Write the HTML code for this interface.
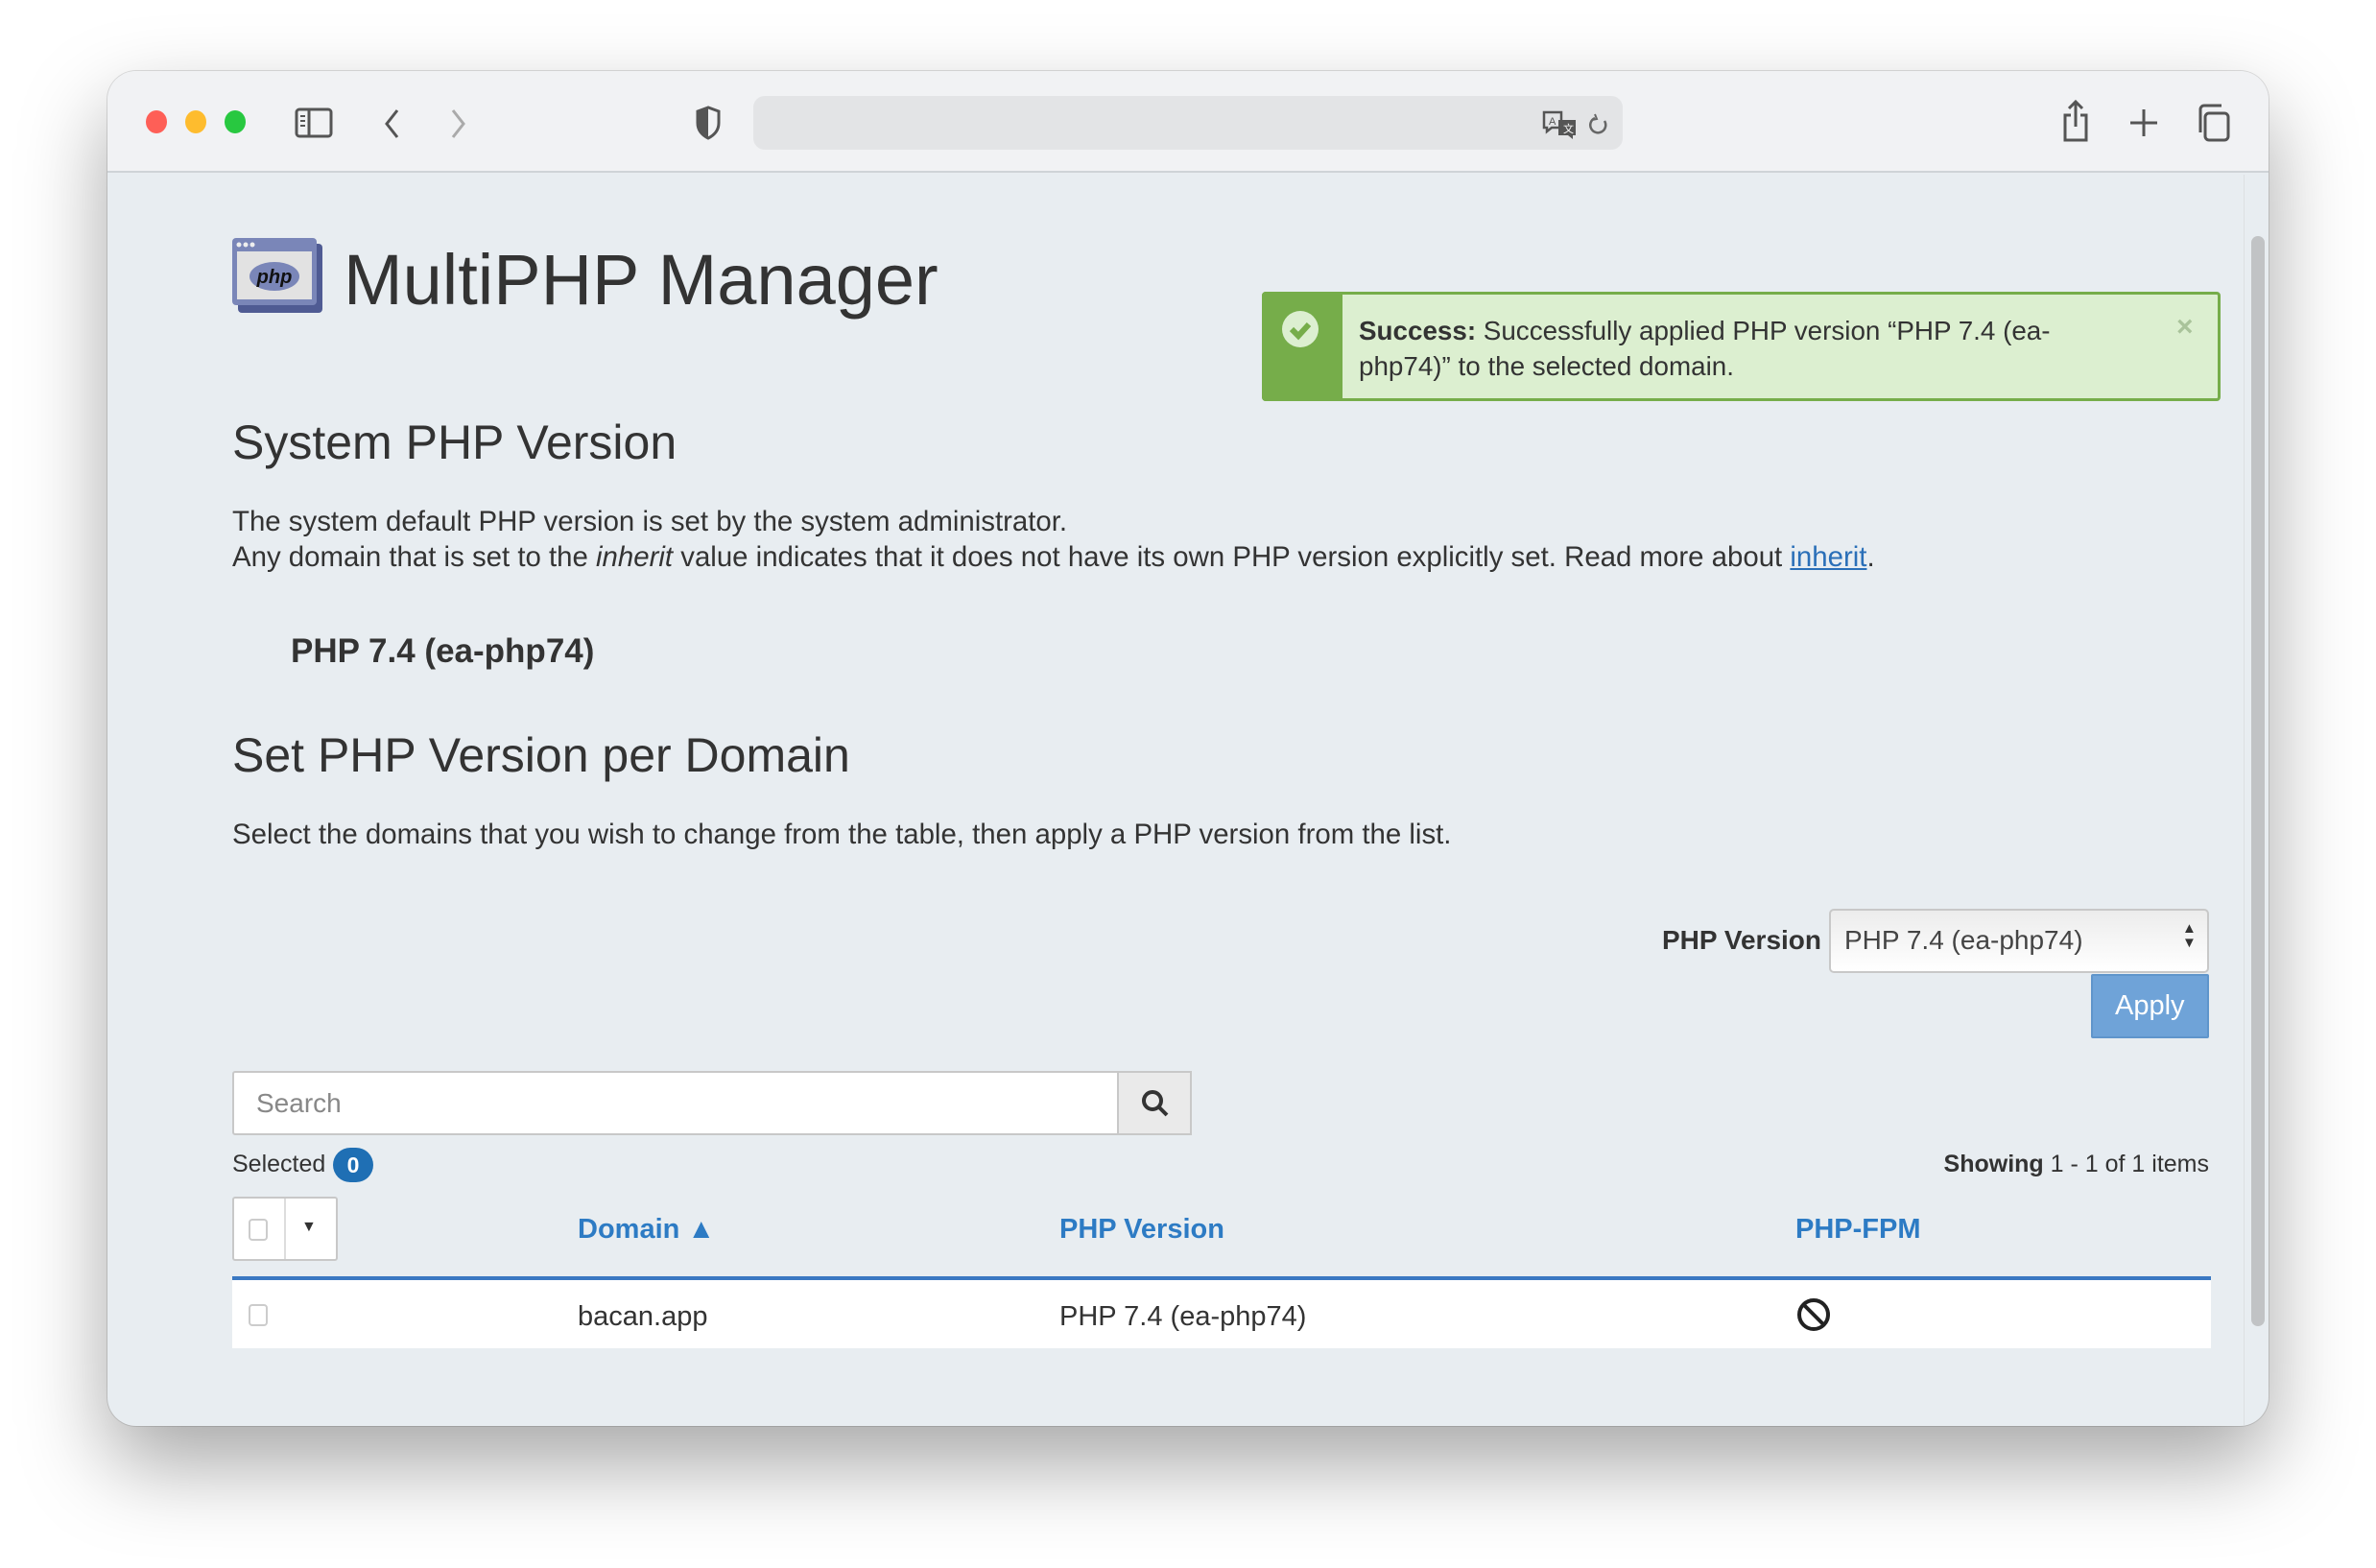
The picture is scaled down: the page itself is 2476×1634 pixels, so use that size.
<!DOCTYPE html>
<html><head><meta charset="utf-8"><style>
*{box-sizing:border-box;margin:0;padding:0}
body{width:2476px;height:1634px;background:#fff;position:relative;overflow:hidden;font-family:"Liberation Sans",sans-serif;color:#333}
.win{position:absolute;left:112px;top:74px;width:2252px;height:1412px;border-radius:30px;background:#e8edf1;box-shadow:0 40px 90px rgba(0,0,0,.35),0 0 0 1px rgba(0,0,0,.12);overflow:hidden}
.tb{position:absolute;left:0;top:0;width:100%;height:106px;background:#f1f2f4;border-bottom:2px solid #cfd3d7}
.a{position:absolute}
.dot{position:absolute;top:41px;width:22px;height:24px;border-radius:50%}
.t{position:absolute;white-space:nowrap}
</style></head><body>
<div class="win">
 <div class="tb">
  <div class="dot" style="left:40px;background:#fe5f57"></div>
  <div class="dot" style="left:81px;background:#febc2e"></div>
  <div class="dot" style="left:122px;background:#28c840"></div>
  <svg class="a" style="left:195px;top:38px" width="40" height="32" viewBox="0 0 40 32"><rect x="2" y="2" width="36" height="28" rx="3" fill="none" stroke="#555" stroke-width="3"/><line x1="15" y1="2" x2="15" y2="30" stroke="#555" stroke-width="3"/><path d="M6 9h5M6 14h5M6 19h5" stroke="#555" stroke-width="2"/></svg>
  <svg class="a" style="left:284px;top:38px" width="24" height="34"><path d="M18 3L7 17l11 14" fill="none" stroke="#555" stroke-width="3"/></svg>
  <svg class="a" style="left:354px;top:38px" width="24" height="34"><path d="M6 3l11 14L6 31" fill="none" stroke="#aaa" stroke-width="3"/></svg>
  <svg class="a" style="left:612px;top:36px" width="28" height="36"><path d="M14 2L3 6v12c0 8 5 13 11 16 6-3 11-8 11-16V6z" fill="none" stroke="#555" stroke-width="3"/><path d="M3 6l11-4v32c-6-3-11-8-11-16z" fill="#555"/></svg>
  <div class="a" style="left:673px;top:26px;width:906px;height:56px;border-radius:12px;background:#e3e4e6"></div>
  <svg class="a" style="left:1494px;top:40px" width="40" height="32" viewBox="0 0 40 32"><path d="M3 3h18v16H11l-5 4v-4H3z" fill="none" stroke="#555" stroke-width="2.5"/><path d="M18 11h18v16h-3v4l-5-4H18z" fill="#555"/><text x="8" y="16" font-size="11" font-family="Liberation Sans" fill="#555">A</text><text x="23" y="24" font-size="11" font-family="Liberation Sans" fill="#fff">文</text></svg>
  <svg class="a" style="left:1542px;top:42px" width="24" height="30"><path d="M18 10a8 8 0 1 1-10-3" fill="none" stroke="#666" stroke-width="2.5"/><path d="M8 3l2 5-5 1" fill="none" stroke="#666" stroke-width="2"/></svg>
  <svg class="a" style="left:2036px;top:28px" width="30" height="48"><path d="M10 18H4v26h22V18h-6M15 30V4M8 11l7-7 7 7" fill="none" stroke="#555" stroke-width="3"/></svg>
  <svg class="a" style="left:2107px;top:38px" width="30" height="32"><path d="M15 2v28M1 16h28" stroke="#555" stroke-width="3"/></svg>
  <svg class="a" style="left:2177px;top:34px" width="36" height="40"><rect x="9" y="10" width="24" height="28" rx="4" fill="none" stroke="#555" stroke-width="3"/><path d="M4 30V6a4 4 0 0 1 4-4h18" fill="none" stroke="#555" stroke-width="3"/></svg>
 </div>
 <div class="a" style="left:2234px;top:172px;width:14px;height:1136px;border-radius:7px;background:#c1c3c5"></div>
 <div class="a" style="left:2226px;top:108px;width:1px;height:1304px;background:#dde0e3"></div>

 <svg class="a" style="left:130px;top:174px" width="96" height="80" viewBox="0 0 96 80"><rect x="6" y="6" width="88" height="72" rx="4" fill="#4f5b93"/><rect x="0" y="0" width="88" height="70" rx="4" fill="#7a86b8"/><rect x="5" y="14" width="78" height="50" fill="#e2e2e2"/><circle cx="7" cy="7" r="2.5" fill="#eee"/><circle cx="14" cy="7" r="2.5" fill="#eee"/><circle cx="21" cy="7" r="2.5" fill="#eee"/><ellipse cx="44" cy="40" rx="26" ry="15" fill="#7a86b8"/><text x="44" y="47" text-anchor="middle" font-family="Liberation Sans" font-style="italic" font-weight="bold" font-size="20" fill="#111">php</text></svg>
 <div class="t" style="left:246px;top:175px;font-size:74px;color:#333">MultiPHP Manager</div>

 <div class="a" style="left:1203px;top:230px;width:999px;height:114px;border:3px solid #76ad4a;border-radius:4px;background:#dcefd0"></div>
 <div class="a" style="left:1203px;top:230px;width:84px;height:114px;background:#76ad4a;border-radius:4px 0 0 4px"></div>
 <svg class="a" style="left:1223px;top:249px" width="40" height="40"><circle cx="20" cy="20" r="19" fill="#dcefd0"/><path d="M11 20l7 7 11-12" fill="none" stroke="#76ad4a" stroke-width="6"/></svg>
 <div class="t" style="left:1304px;top:252px;font-size:27.8px;line-height:37px;color:#333"><b>Success:</b> Successfully applied PHP version “PHP 7.4 (ea-<br>php74)” to the selected domain.</div>
 <div class="t" style="left:2156px;top:250px;font-size:30px;font-weight:bold;color:#a9c39a">×</div>

 <div class="t" style="left:130px;top:358px;font-size:50px;color:#333">System PHP Version</div>
 <div class="t" style="left:130px;top:451px;font-size:29.4px;line-height:37px;color:#333">The system default PHP version is set by the system administrator.<br>Any domain that is set to the <i>inherit</i> value indicates that it does not have its own PHP version explicitly set. Read more about <span style="color:#2a6fb8;text-decoration:underline">inherit</span>.</div>
 <div class="t" style="left:191px;top:585px;font-size:35px;font-weight:bold;color:#333">PHP 7.4 (ea-php74)</div>
 <div class="t" style="left:130px;top:684px;font-size:50px;color:#333">Set PHP Version per Domain</div>
 <div class="t" style="left:130px;top:779px;font-size:29.4px;color:#333">Select the domains that you wish to change from the table, then apply a PHP version from the list.</div>

 <div class="t" style="left:1620px;top:890px;font-size:28px;font-weight:bold;color:#333">PHP Version</div>
 <div class="a" style="left:1794px;top:873px;width:396px;height:67px;border:2px solid #c8c8c8;border-radius:5px;background:linear-gradient(#ececec,#fff)"></div>
 <div class="t" style="left:1810px;top:890px;font-size:28px;color:#444">PHP 7.4 (ea-php74)</div>
 <div class="t" style="left:2162px;top:886px;font-size:15px;line-height:15px;color:#333">▲<br>▼</div>
 <div class="a" style="left:2067px;top:941px;width:123px;height:67px;background:#6fa3d8;border:2px solid #5f95cb;border-radius:2px"></div>
 <div class="t" style="left:2092px;top:958px;font-size:29px;color:#fff">Apply</div>

 <div class="a" style="left:130px;top:1042px;width:1000px;height:67px;border:2px solid #c8c8c8;border-radius:3px;background:#fff"></div>
 <div class="a" style="left:1052px;top:1042px;width:78px;height:67px;border:2px solid #c8c8c8;background:#eaeaea"></div>
 <div class="t" style="left:155px;top:1060px;font-size:28px;color:#888">Search</div>
 <svg class="a" style="left:1076px;top:1060px" width="32" height="32"><circle cx="13" cy="13" r="9" fill="none" stroke="#333" stroke-width="4"/><path d="M20 20l8 8" stroke="#333" stroke-width="4"/></svg>

 <div class="t" style="left:130px;top:1125px;font-size:25px;color:#333">Selected</div>
 <div class="a" style="left:235px;top:1122px;width:42px;height:36px;border-radius:18px;background:#1f6fb4;color:#fff;font-size:23px;font-weight:bold;text-align:center;line-height:36px">0</div>
 <div class="t" style="right:62px;top:1125px;font-size:25px;color:#333"><b>Showing</b> 1 - 1 of 1 items</div>

 <div class="a" style="left:130px;top:1173px;width:110px;height:67px;border:2px solid #c8c8c8;border-radius:3px;background:#fff"></div>
 <div class="a" style="left:184px;top:1175px;width:2px;height:63px;background:#ddd"></div>
 <div class="a" style="left:147px;top:1196px;width:20px;height:23px;border:2px solid #ccc;border-radius:4px"></div>
 <div class="t" style="left:202px;top:1196px;font-size:16px;color:#333">▼</div>
 <div class="t" style="left:490px;top:1191px;font-size:29px;font-weight:bold;color:#2d7bc4">Domain ▲</div>
 <div class="t" style="left:992px;top:1191px;font-size:29px;font-weight:bold;color:#2d7bc4">PHP Version</div>
 <div class="t" style="left:1759px;top:1191px;font-size:29px;font-weight:bold;color:#2d7bc4">PHP-FPM</div>
 <div class="a" style="left:130px;top:1256px;width:2062px;height:4px;background:#3a78c2"></div>
 <div class="a" style="left:130px;top:1260px;width:2062px;height:71px;background:#fff"></div>
 <div class="a" style="left:147px;top:1285px;width:20px;height:23px;border:2px solid #ccc;border-radius:4px"></div>
 <div class="t" style="left:490px;top:1282px;font-size:29px;color:#333">bacan.app</div>
 <div class="t" style="left:992px;top:1282px;font-size:29px;color:#333">PHP 7.4 (ea-php74)</div>
 <svg class="a" style="left:1760px;top:1278px" width="36" height="36"><circle cx="18" cy="18" r="15" fill="none" stroke="#222" stroke-width="4"/><path d="M8 8l20 20" stroke="#222" stroke-width="4"/></svg>
</div>
</body></html>
